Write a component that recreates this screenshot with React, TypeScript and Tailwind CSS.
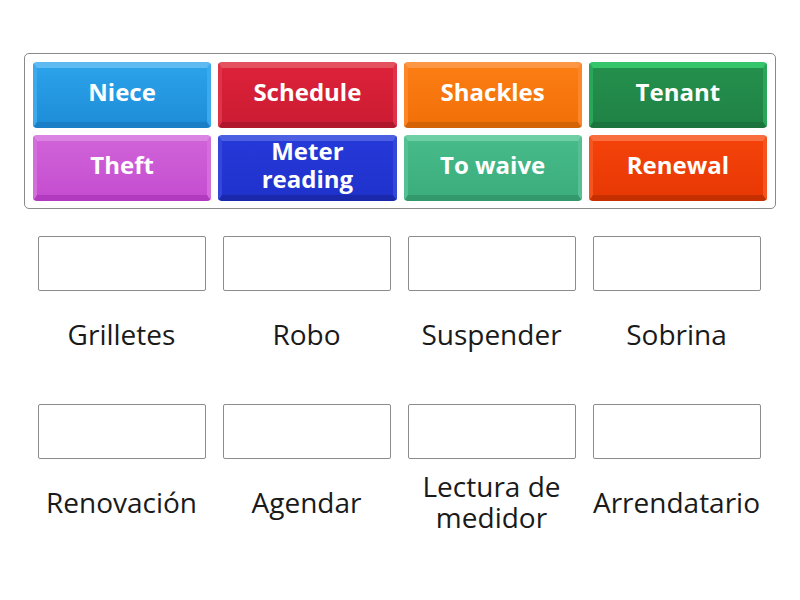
const tiles = [
  { label: 'Niece', cls: 'bg-gradient-to-b from-[#2ba2ea] to-[#1e8ed8] border-t-[#5fbaf2] border-x-[#3ba9ec] border-b-[#1a7fc6]' },
  { label: 'Schedule', cls: 'bg-gradient-to-b from-[#dc2139] to-[#cc1c33] border-t-[#e4515f] border-x-[#dd3449] border-b-[#b0172b]' },
  { label: 'Shackles', cls: 'bg-gradient-to-b from-[#fc7d14] to-[#f27008] border-t-[#fd9745] border-x-[#fc8628] border-b-[#d46206]' },
  { label: 'Tenant', cls: 'bg-gradient-to-b from-[#24904d] to-[#208346] border-t-[#35c66c] border-x-[#2aa65a] border-b-[#1b733d]' },
  { label: 'Theft', cls: 'bg-gradient-to-b from-[#d062d8] to-[#c54ed0] border-t-[#dc84e3] border-x-[#d36edb] border-b-[#b23abf]' },
  { label: 'Meter reading', cls: 'bg-gradient-to-b from-[#2539d8] to-[#2032cc] border-t-[#4c5fe2] border-x-[#3447da] border-b-[#1a29ac]' },
  { label: 'To waive', cls: 'bg-gradient-to-b from-[#47ba8a] to-[#3cae7e] border-t-[#6ecfa4] border-x-[#54c094] border-b-[#33996c]' },
  { label: 'Renewal', cls: 'bg-gradient-to-b from-[#f4420a] to-[#e83804] border-t-[#f86e3e] border-x-[#f5541e] border-b-[#c62f00]' },
];

const targets = [
  ['Grilletes'],
  ['Robo'],
  ['Suspender'],
  ['Sobrina'],
  ['Renovación'],
  ['Agendar'],
  ['Lectura de', 'medidor'],
  ['Arrendatario'],
];

export default function App() {
  return (
    <div className="w-[800px] h-[600px] bg-white pt-[53px] font-['Open_Sans','Noto_Sans',sans-serif]">
      <div className="mx-[24px] w-[752px] rounded-[5px] border border-[#8a8a8a] px-[8px] pt-[8px] pb-[7px]">
        <div className="grid grid-cols-4 gap-[7px]">
          {tiles.map((t) => (
            <div
              key={t.label}
              className={`h-[66px] rounded-[4px] border-t-[6px] border-x-[4px] border-b-[6px] flex items-center justify-center text-center text-white font-bold text-[24px] leading-[28px] ${t.cls}`}
            >
              <span className="max-w-[110px] mb-[6px]">{t.label}</span>
            </div>
          ))}
        </div>
      </div>

      <div className="ml-[29px] mt-[27px] grid grid-cols-[repeat(4,185px)] gap-y-[27px]">
        {targets.map((lines) => (
          <div key={lines.join(' ')} className="flex flex-col items-center">
            <div className="w-[168px] h-[55px] rounded-[2px] border border-[#8c8c8c] bg-white" />
            <div className="h-[86px] flex flex-col items-center justify-center text-[28px] leading-[31px] text-[#1a1a1a] text-center whitespace-nowrap">
              {lines.map((l) => (
                <span key={l}>{l}</span>
              ))}
            </div>
          </div>
        ))}
      </div>
    </div>
  );
}
